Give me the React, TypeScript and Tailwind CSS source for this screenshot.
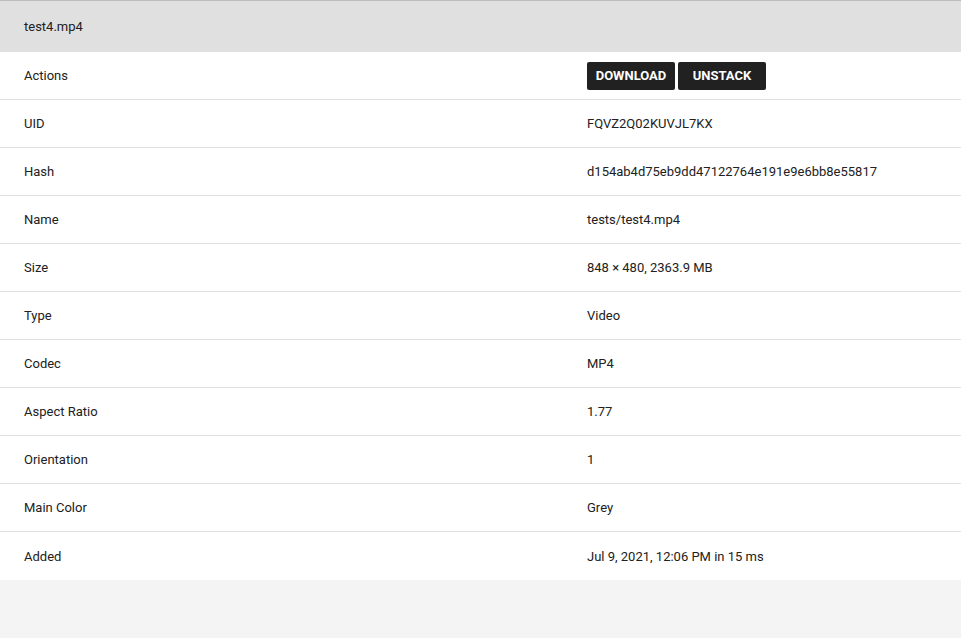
const rows: [string, string][] = [
  ["UID", "FQVZ2Q02KUVJL7KX"],
  ["Hash", "d154ab4d75eb9dd47122764e191e9e6bb8e55817"],
  ["Name", "tests/test4.mp4"],
  ["Size", "848 × 480, 2363.9 MB"],
  ["Type", "Video"],
  ["Codec", "MP4"],
  ["Aspect Ratio", "1.77"],
  ["Orientation", "1"],
  ["Main Color", "Grey"],
  ["Added", "Jul 9, 2021, 12:06 PM in 15 ms"],
];

function Row({ label, children, last }: { label: string; children: React.ReactNode; last?: boolean }) {
  return (
    <div
      className={`grid grid-cols-[563px_1fr] h-[48px] items-center bg-white ${
        last ? "pt-[1px]" : "border-b border-[#e0e0e0]"
      }`}
    >
      <div className="pl-6">{label}</div>
      <div className="pl-6">{children}</div>
    </div>
  );
}

export default function App() {
  return (
    <div
      className="min-h-[638px] bg-[#f4f4f4] text-[13px] text-[#212121]"
      style={{ fontFamily: "Roboto, 'Liberation Sans', sans-serif" }}
    >
      <div className="h-[52px] bg-[#e0e0e0] border-t border-[#bdbdbd] flex items-center pl-6">
        test4.mp4
      </div>
      <Row label="Actions">
        <div className="flex gap-[3px]">
          <button className="h-[28px] w-[88px] rounded-[2px] bg-[#212121] text-white text-[13px] font-bold uppercase">
            Download
          </button>
          <button className="h-[28px] w-[88px] rounded-[2px] bg-[#212121] text-white text-[13px] font-bold uppercase">
            Unstack
          </button>
        </div>
      </Row>
      {rows.map(([label, value], i) => (
        <Row key={label} label={label} last={i === rows.length - 1}>
          {value}
        </Row>
      ))}
    </div>
  );
}
